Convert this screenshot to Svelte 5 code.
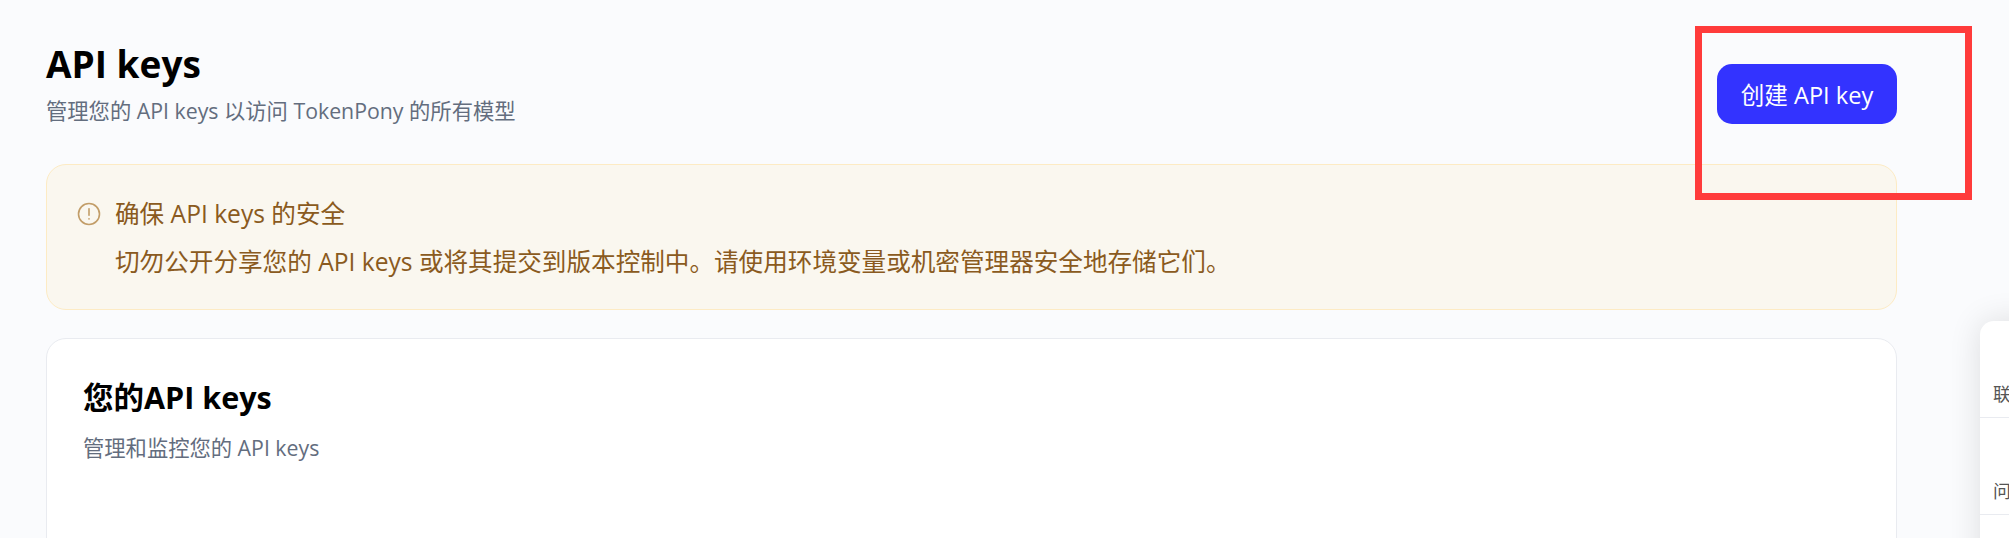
<script>
  // the panel runs off the right edge, only the first glyph of each row shows
  const panelRows = ['联', '问'];
</script>

<div class="page">
  <main class="content">
    <header class="page-header">
      <div>
        <h1>API keys</h1>
        <p class="subtitle">管理您的 API keys 以访问 TokenPony 的所有模型</p>
      </div>
      <button type="button" class="create-button">创建 API key</button>
    </header>

    <section class="notice">
      <div class="notice-title">
        <svg class="notice-icon" viewBox="0 0 24 24" fill="none" stroke="currentColor" stroke-width="1.6" stroke-linecap="round" aria-hidden="true">
          <circle cx="12" cy="12" r="10.5" />
          <path d="M12 6.8v6.4" />
          <path d="M12 16.8v.2" />
        </svg>
        <span>确保 API keys 的安全</span>
      </div>
      <p>切勿公开分享您的 API keys 或将其提交到版本控制中。请使用环境变量或机密管理器安全地存储它们。</p>
    </section>

    <section class="card">
      <h2>您的API keys</h2>
      <p class="card-subtitle">管理和监控您的 API keys</p>
    </section>
  </main>

  <aside class="side-panel">
    {#each panelRows as row}
      <div class="panel-row">{row}</div>
    {/each}
  </aside>

  <div class="highlight"></div>
</div>

<style>
  :global(body) {
    margin: 0;
    background: #fafbfd;
  }

  .page {
    position: relative;
    height: 538px;
    overflow: hidden;
    background: #fafbfd;
    font-family: "Open Sans", "Noto Sans CJK SC", sans-serif;
  }

  .content {
    width: 1851px;
    padding: 41px 0 0 46px;
  }

  .page-header {
    display: flex;
    justify-content: space-between;
    align-items: flex-end;
    margin-bottom: 40px;
  }

  h1 {
    margin: 0;
    font-size: 37px;
    line-height: 46px;
    font-weight: 700;
    color: #000;
  }

  .subtitle {
    margin: 11px 0 0;
    font-size: 21.3px;
    line-height: 26px;
    color: #636d7e;
  }

  .create-button {
    width: 180px;
    height: 60px;
    border: none;
    border-radius: 15px;
    background: #3333ff;
    color: #fff;
    font: inherit;
    font-size: 23.6px;
  }

  .notice {
    box-sizing: border-box;
    height: 146px;
    padding: 34px 30px;
    border: 1px solid #fdebc4;
    border-radius: 20px;
    background: #faf7ef;
    color: #8a5a20;
    font-size: 24.6px;
    line-height: 30px;
  }

  .notice-title {
    display: flex;
    align-items: center;
    gap: 14px;
  }

  .notice-icon {
    width: 24px;
    height: 24px;
    color: #c29d68;
    flex-shrink: 0;
  }

  .notice p {
    margin: 18px 0 0 38px;
  }

  .card {
    box-sizing: border-box;
    height: 300px;
    margin-top: 28px;
    padding: 39px 36px;
    border: 1px solid #e9ebf0;
    border-radius: 20px;
    background: #fff;
  }

  h2 {
    margin: 0;
    font-size: 30.5px;
    line-height: 38px;
    font-weight: 700;
    color: #000;
  }

  .card-subtitle {
    margin: 19px 0 0;
    font-size: 21.3px;
    line-height: 26px;
    color: #636d7e;
  }

  .side-panel {
    position: absolute;
    left: 1980px;
    top: 321px;
    width: 200px;
    height: 300px;
    border-radius: 14px 0 0 14px;
    background: #fff;
    box-shadow: 0 0 32px rgba(0, 0, 0, 0.12);
  }

  .panel-row {
    box-sizing: border-box;
    height: 97px;
    padding: 0 13px 12px;
    display: flex;
    align-items: flex-end;
    border-bottom: 1px solid #e9ebf0;
    font-size: 18px;
    line-height: 22px;
    color: #555;
  }

  .highlight {
    position: absolute;
    left: 1695px;
    top: 26px;
    width: 263px;
    height: 160px;
    border: 7px solid #ff3b3b;
  }
</style>
